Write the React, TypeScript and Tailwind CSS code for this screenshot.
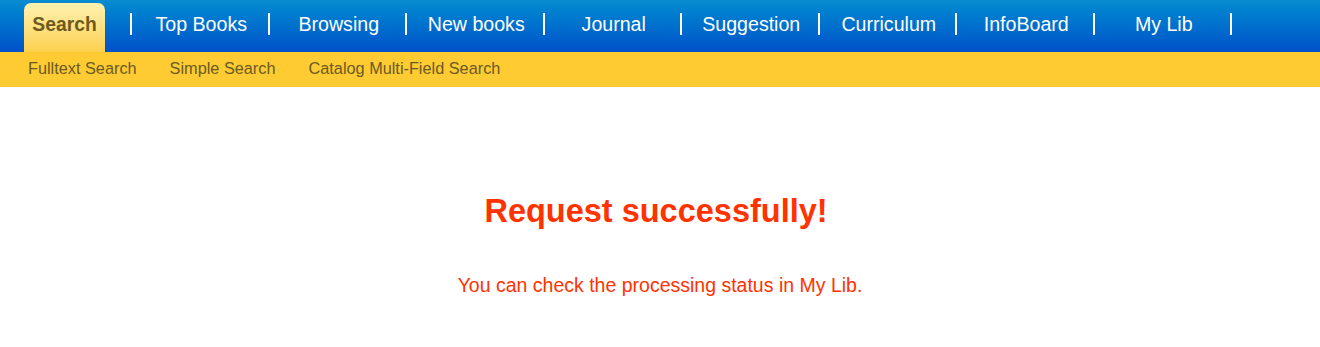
import React from 'react';

const navItems = ['Top Books', 'Browsing', 'New books', 'Journal', 'Suggestion', 'Curriculum', 'InfoBoard', 'My Lib'];
const subItems = ['Fulltext Search', 'Simple Search', 'Catalog Multi-Field Search'];

export default function App() {
  return (
    <div className="w-[1320px] h-[347px] bg-white font-['Liberation_Sans',Arial,sans-serif]">
      {/* Main nav */}
      <div className="h-[52px] bg-gradient-to-b from-[#0a8cd0] to-[#0050c9] flex items-end">
        <div className="w-[130px] h-full flex items-end pl-[24px]">
          <div className="w-[81px] h-[49px] pb-[5px] rounded-t-[7px] bg-gradient-to-b from-[#fff2ae] to-[#fdd04c] flex items-center justify-center text-[19.3px] font-bold text-[#6e5a1c]">
            Search
          </div>
        </div>
        <div className="flex h-full items-center pb-[4px]">
          {navItems.map((item) => (
            <div key={item} className="flex items-center">
              <span className="w-[2px] h-[22px] bg-white" />
              <span className="w-[135.5px] pl-[3px] pt-[2px] text-center text-white text-[19.6px]">{item}</span>
            </div>
          ))}
          <span className="w-[2px] h-[22px] bg-white" />
        </div>
      </div>

      {/* Sub nav */}
      <div className="h-[35px] pb-[2px] bg-[#fecb33] flex items-center pl-[28px] gap-[33px] text-[16.3px] text-[#6b5a24]">
        {subItems.map((item) => (
          <span key={item}>{item}</span>
        ))}
      </div>

      {/* Message */}
      <div className="flex flex-col items-center pt-[105px]">
        <h1 className="mr-[8px] text-[32.5px] leading-[38px] font-bold text-[#ff3300]">Request successfully!</h1>
        <p className="mt-[44px] text-[19.5px] leading-[22px] text-[#ff3300]">
          You can check the processing status in My Lib.
        </p>
      </div>
    </div>
  );
}
